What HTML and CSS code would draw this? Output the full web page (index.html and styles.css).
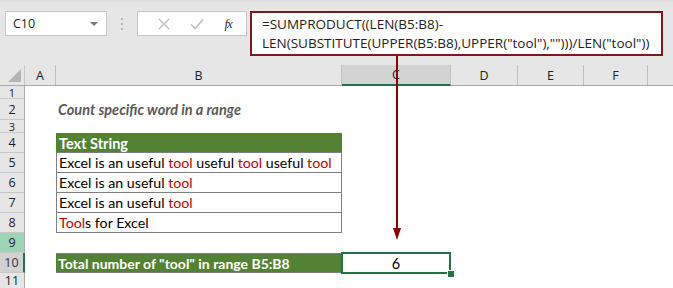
FILE: index.html
```html
<!DOCTYPE html>
<html>
<head>
	<link rel="stylesheet" href="styles.css">
</head>
<body>
	<div class="app">
		<div class="toolbar">
			<div class="name-box">
				<span>C10</span>
				<span class="drop"></span>
			</div>
			<div class="grip">
				<svg width="4" height="12" viewBox="0 0 4 12"><rect x="1" y="0" width="2" height="2" fill="#b8b8b8"/><rect x="1" y="5" width="2" height="2" fill="#b8b8b8"/><rect x="1" y="10" width="2" height="2" fill="#b8b8b8"/></svg>
			</div>
			<div class="fx-box">
				<svg class="icon" width="12" height="12" viewBox="0 0 12 12"><path d="M1 1 L11 11 M11 1 L1 11" stroke="#bdbdbd" stroke-width="1.3" fill="none"/></svg>
				<svg class="icon" width="14" height="12" viewBox="0 0 14 12"><path d="M1 6.5 L5 10.5 L13 1.5" stroke="#bdbdbd" stroke-width="1.6" fill="none"/></svg>
				<span class="fx">fx</span>
			</div>
			<div class="formula">
				<div>=SUMPRODUCT((LEN(B5:B8)-</div>
				<div>LEN(SUBSTITUTE(UPPER(B5:B8),UPPER("tool"),"")))/LEN("tool"))</div>
			</div>
		</div>

		<div class="sheet">
			<div class="row head">
				<div class="corner"><span class="tri"></span></div>
				<div class="ch">A</div>
				<div class="ch">B</div>
				<div class="ch sel">C</div>
				<div class="ch">D</div>
				<div class="ch">E</div>
				<div class="ch">F</div>
				<div class="ch last"></div>
			</div>
			<div class="row short"><div class="rh">1</div></div>
			<div class="row tall">
				<div class="rh">2</div>
				<div class="c"></div>
				<div class="c title"><span>Count specific word in a range</span></div>
			</div>
			<div class="row short"><div class="rh">3</div></div>
			<div class="row">
				<div class="rh">4</div>
				<div class="c"></div>
				<div class="c tbl green"><span>Text String</span></div>
			</div>
			<div class="row">
				<div class="rh">5</div>
				<div class="c"></div>
				<div class="c tbl"><span>Excel is an useful <em>tool</em> useful <em>tool</em> useful <em>tool</em></span></div>
			</div>
			<div class="row">
				<div class="rh">6</div>
				<div class="c"></div>
				<div class="c tbl"><span>Excel is an useful <em>tool</em></span></div>
			</div>
			<div class="row">
				<div class="rh">7</div>
				<div class="c"></div>
				<div class="c tbl"><span>Excel is an useful <em>tool</em></span></div>
			</div>
			<div class="row">
				<div class="rh">8</div>
				<div class="c"></div>
				<div class="c tbl"><span><em>Tool</em>s for Excel</span></div>
			</div>
			<div class="row">
				<div class="rh drag">9</div>
			</div>
			<div class="row">
				<div class="rh cur">10</div>
				<div class="c"></div>
				<div class="c total"><span>Total number of "tool" in range B5:B8</span></div>
				<div class="c result">6<span class="handle"></span></div>
			</div>
			<div class="row last-row">
				<div class="rh">11</div>
			</div>
		</div>

		<div class="arrow">
			<div class="shaft"></div>
			<svg class="head-tip" width="8" height="12" viewBox="0 0 8 12"><path d="M0 0 L4 12 L8 0 Z" fill="#8b0000"/></svg>
		</div>
	</div>
</body>
</html>
```

FILE: styles.css
```css
html,body{
	margin: 0;
	padding: 0;
	background: #fff;
}
.app{
	position: relative;
	width: 673px;
	height: 288px;
	overflow: hidden;
	font-family: "Lato", sans-serif;
}
.toolbar{
	height: 65px;
	background: #e6e6e6;
	border-top: 2px solid #dedede;
	box-sizing: border-box;
	display: flex;
	align-items: flex-start;
	padding: 9px 0 0 5px;
	font-family: "Open Sans", sans-serif;
	color: #222;
}
.name-box{
	width: 102px;
	height: 25px;
	box-sizing: border-box;
	background: #fff;
	border: 1px solid #c6c6c6;
	display: flex;
	align-items: center;
	justify-content: space-between;
	padding: 0 8px 0 7px;
	font-size: 12.5px;
}
.drop{
	width: 0;
	height: 0;
	border-left: 4px solid transparent;
	border-right: 4px solid transparent;
	border-top: 4px solid #777;
}
.grip{
	width: 30px;
	height: 25px;
	display: flex;
	align-items: center;
	justify-content: center;
}
.fx-box{
	width: 110px;
	height: 25px;
	box-sizing: border-box;
	background: #fff;
	border: 1px solid #c6c6c6;
	display: flex;
	align-items: center;
	justify-content: space-around;
	padding: 0 4px 0 10px;
}
.fx{
	font-family: "Liberation Serif", serif;
	font-style: italic;
	font-size: 13px;
	color: #333;
	letter-spacing: -1px;
}
.formula{
	margin-left: 3px;
	width: 413px;
	height: 45px;
	box-sizing: border-box;
	background: #fff;
	border: 2px solid #7b1a1a;
	padding: 2px 0 0 10px;
	font-size: 13.5px;
	line-height: 19px;
}
.sheet{
	font-size: 14.5px;
}
.row{
	display: grid;
	grid-template-columns: 25px 31px 286px 109px 67px 66px 64px 1fr;
	height: 20px;
}
.row.short{
	height: 13px;
}
.row.tall{
	height: 21px;
}
.row.short .rh{
	font-size: 11px;
	line-height: 11px;
}
.row.last-row{
	height: 16px;
}
.row.last-row .rh{
	align-items: flex-start;
	padding-top: 1px;
	line-height: 14px;
	border-bottom: none;
}
.head{
	background: #e6e6e6;
	border-bottom: 1px solid #ababab;
	height: 21px;
	box-sizing: border-box;
	font-family: "Open Sans", sans-serif;
	font-size: 12.5px;
	color: #222;
}
.corner{
	position: relative;
	border-right: 1px solid #c8c8c8;
}
.tri{
	position: absolute;
	right: 3px;
	bottom: 3px;
	width: 0;
	height: 0;
	border-left: 13px solid transparent;
	border-bottom: 13px solid #b5b5b5;
}
.ch{
	border-right: 1px solid #c0c0c0;
	display: flex;
	align-items: center;
	justify-content: center;
}
.ch.sel{
	background: #d2d2d2;
	border-bottom: 2px solid #217346;
	margin-bottom: -1px;
}
.ch.last{
	border-right: none;
}
.rh{
	background: #e6e6e6;
	border-right: 1px solid #ababab;
	border-bottom: 1px solid #c8c8c8;
	box-sizing: border-box;
	display: flex;
	align-items: center;
	justify-content: center;
	font-family: "Open Sans", sans-serif;
	font-size: 12.5px;
	color: #222;
}
.rh.drag{
	background: #9fd5b7;
}
.rh.cur{
	background: #d2d2d2;
	border-right: 2px solid #217346;
	color: #333;
}
.c{
	display: flex;
	align-items: center;
	white-space: nowrap;
	box-sizing: border-box;
	padding-left: 2px;
	color: #000;
}
.title{
	font-style: italic;
	font-weight: bold;
	color: #595959;
}
.tbl{
	border: 1px solid #7f7f7f;
	border-top: none;
	font-size: 14.2px;
}
.tbl.green{
	background: #548235;
	border-color: #548235;
	border-bottom-color: #7f7f7f;
	color: #fff;
	font-weight: bold;
	border-top: 1px solid #548235;
	font-size: 14.5px;
}
.tbl em{
	font-style: normal;
	color: #c00000;
}
.total{
	background: #548235;
	color: #fff;
	font-weight: bold;
	font-size: 14px;
	border-top: 1px solid #7f7f7f;
	border-bottom: 1px solid #7f7f7f;
}
.result{
	position: relative;
	justify-content: center;
	padding: 0;
	margin: -1px 0 -1px -1px;
	height: 22px;
	border: 2px solid #217346;
}
.handle{
	position: absolute;
	right: -5px;
	bottom: -5px;
	width: 6px;
	height: 6px;
	background: #217346;
	border: 1px solid #fff;
	border-width: 1px 0 0 1px;
}
.arrow{
	position: absolute;
	left: 393px;
	top: 56px;
	width: 8px;
	display: flex;
	flex-direction: column;
	align-items: center;
}
.shaft{
	width: 2px;
	height: 174px;
	background: #8b0000;
}
.head-tip{
	display: block;
	margin-top: -2px;
}
```
